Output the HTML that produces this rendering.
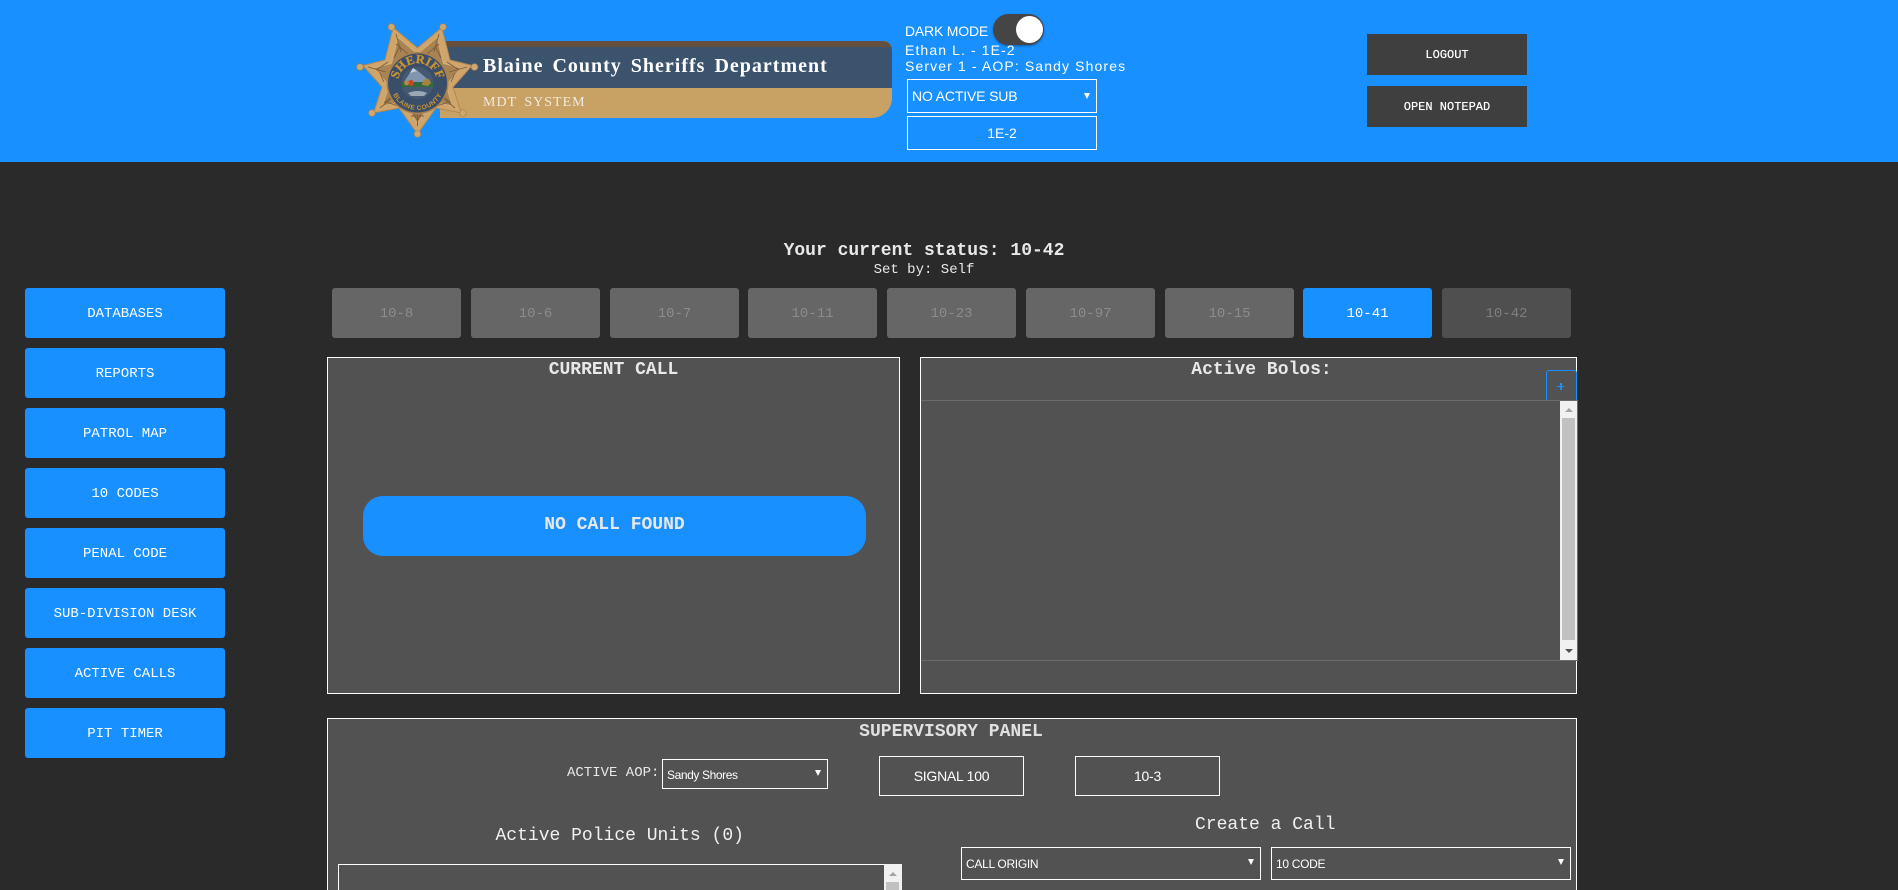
<!DOCTYPE html>
<html><head><meta charset="utf-8"><title>MDT</title>
<style>
html,body{margin:0;padding:0;width:1898px;height:890px;overflow:hidden;background:#2a2a2a}
*{box-sizing:border-box}
#root{position:relative;width:1898px;height:890px;overflow:hidden;background:#2a2a2a}
.a{position:absolute}
.m{font-family:"Liberation Mono",monospace}
.s{font-family:"Liberation Sans",sans-serif}
.c{display:flex;align-items:center;justify-content:center;text-align:center;white-space:nowrap}
.t{white-space:nowrap}
.side{left:25px;width:200px;height:50px;padding-top:1px;background:#1890ff;border-radius:3px;color:#fff;font:14px "Liberation Mono",monospace}
.st{top:288px;width:129px;height:50px;padding-top:1px;background:#666;border-radius:3px;color:#8c8c8c;font:14px "Liberation Mono",monospace}
.panel{background:#525252;border:1px solid #fff}
.box{border:1px solid #fff;color:#fff;font-family:"Liberation Sans",sans-serif}
.arr{position:absolute;width:0;height:0;border-left:3.5px solid transparent;border-right:3.5px solid transparent;border-top:6px solid #fff}
.sb{background:#f1f1f1}
.up{position:absolute;width:0;height:0;border-left:4px solid transparent;border-right:4px solid transparent;border-bottom:4px solid #a3a3a3}
</style></head>
<body>
<div id="root">
<div class="a" style="left:0;top:0;width:1898px;height:162px;background:#1890ff"></div>

<!-- banner -->
<div class="a" style="left:440px;top:41px;width:452px;height:77px;border-radius:0 9px 20px 0;overflow:hidden;background:#c8a164">
  <div class="a" style="left:0;top:0;width:452px;height:6px;background:#654f3d"></div>
  <div class="a" style="left:0;top:6px;width:452px;height:41px;background:#3c536e"></div>
</div>
<div class="a t" style="left:483px;top:54px;font:bold 20px/24px 'Liberation Serif',serif;letter-spacing:1px;word-spacing:3px;color:#fff">Blaine County Sheriffs Department</div>
<div class="a t" style="left:483px;top:94px;font:14px/18px 'Liberation Serif',serif;letter-spacing:1px;word-spacing:3px;color:#f1eadf">MDT SYSTEM</div>

<!-- star -->
<svg class="a" style="left:350px;top:15px" width="135" height="125" viewBox="350 15 135 125">
  <defs>
    <path id="arcTop" d="M399 89 A19.5 19.5 0 1 1 436 89"/>
    <path id="arcBot" d="M390.5 83 A27 27 0 0 0 444.5 83"/>
  </defs>
  <polygon points="417.5,134 399,108 373.7,112.9 382,87 362.9,65.5 385,60 393.2,27.5 417.5,48 441.8,27.5 450,60 472.1,65.5 453,87 461.3,112.9 436,108" fill="#cfa56c" stroke="#b08954" stroke-width="1"/>
  <polygon points="417.5,123 402.7,102 382.5,105.9 389.1,85.2 373.8,68 391.5,63.6 398,37.6 417.5,54 437,37.6 443.5,63.6 461.2,68 445.9,85.2 452.5,105.9 432.3,102" fill="#a98452" stroke="#d6b27f" stroke-width=".8"/>
  <g stroke="#7a5f3a" stroke-width=".9" fill="none">
    <path d="M417.5 126V112M380 108L392 98M368 67L386 72M396 34L401 52M439 34L434 52M467 67L449 72M455 108L443 98"/>
    <path d="M396 44L408 54M439 44L427 54M376 70L388 62M459 70L447 62M386 102L398 106M449 102L437 106M411 116L424 116"/>
    <path d="M400 46L394 58M435 46L441 58M380 73L384 82M455 73L451 82M391 97L384 103M444 97L451 103M412 109L417 120M423 109L418 120"/>
  </g>
  <g fill="#cfa870" stroke="#a98450" stroke-width=".7">
    <circle cx="391.5" cy="27" r="3.3"/><circle cx="443" cy="27" r="3.3"/><circle cx="360" cy="67" r="3.3"/><circle cx="474.5" cy="67" r="3.3"/><circle cx="372" cy="113" r="3.3"/><circle cx="463" cy="113" r="3.3"/><circle cx="417.5" cy="134" r="3.3"/>
  </g>
  <circle cx="417.5" cy="83" r="31" fill="#a98150"/>
  <circle cx="417.5" cy="83" r="29.5" fill="#3a4e69"/>
  <text font-family="'Liberation Serif',serif" font-weight="bold" font-size="12.5" fill="#cb932f" stroke="#cb932f" stroke-width=".3"><textPath href="#arcTop" startOffset="50%" text-anchor="middle">SHERIFF</textPath></text>
  <text font-family="'Liberation Sans',sans-serif" font-weight="bold" font-size="6.6" letter-spacing=".5" fill="#cb932f"><textPath href="#arcBot" startOffset="50%" text-anchor="middle">BLAINE COUNTY</textPath></text>
  <circle cx="417.5" cy="83" r="16" fill="#455a72"/>
  <path d="M404 82 L413 68 L418 71 L431 82 Z" fill="#8196ae"/>
  <path d="M410 73 L413 68 L417 71 Z" fill="#c4d0dc"/>
  <path d="M402 82h31v5h-31z" fill="#2f6b3c"/>
  <circle cx="411" cy="83" r="3" fill="#c7432a"/><circle cx="406.5" cy="83" r="2.4" fill="#b8893b"/>
  <path d="M422 85 q1-7 7-6 l2 4 -3 3z" fill="#a5853c"/>
  <path d="M408 93 q10-4 19 0 l-3 3h-13z" fill="#9aa8b6"/>
</svg>

<!-- dark mode + user -->
<div class="a t s" style="left:905px;top:22px;font-size:14px;line-height:18px;letter-spacing:-.2px;color:#fff">DARK MODE</div>
<div class="a" style="left:993px;top:14px;width:51px;height:31px;border-radius:16px;background:#454545;box-shadow:0 1px 2px rgba(0,0,0,.35)"></div>
<div class="a" style="left:1015.5px;top:16px;width:27px;height:27px;border-radius:50%;background:#fff"></div>
<div class="a t s" style="left:905px;top:41px;font-size:14px;line-height:18px;letter-spacing:1.1px;color:#fff">Ethan L. - 1E-2</div>
<div class="a t s" style="left:905px;top:57px;font-size:14px;line-height:18px;letter-spacing:1.12px;color:#fff">Server 1 - AOP: Sandy Shores</div>
<div class="a box" style="left:907px;top:79px;width:190px;height:34px;font-size:14px;line-height:32px;padding-left:4px;letter-spacing:-.15px">NO ACTIVE SUB<span class="arr" style="right:6px;top:13px"></span></div>
<div class="a box c" style="left:907px;top:116px;width:190px;height:34px;font-size:14px">1E-2</div>

<div class="a c m" style="left:1367px;top:34px;width:160px;height:41px;background:#3f3f3f;color:#fff;font-size:12px;text-shadow:0 0 .5px #fff">LOGOUT</div>
<div class="a c m" style="left:1367px;top:86px;width:160px;height:41px;background:#3f3f3f;color:#fff;font-size:12px;text-shadow:0 0 .5px #fff">OPEN NOTEPAD</div>

<!-- sidebar -->
<div class="a c side" style="top:288px">DATABASES</div>
<div class="a c side" style="top:348px">REPORTS</div>
<div class="a c side" style="top:408px">PATROL MAP</div>
<div class="a c side" style="top:468px">10 CODES</div>
<div class="a c side" style="top:528px">PENAL CODE</div>
<div class="a c side" style="top:588px">SUB-DIVISION DESK</div>
<div class="a c side" style="top:648px">ACTIVE CALLS</div>
<div class="a c side" style="top:708px">PIT TIMER</div>

<!-- status -->
<div class="a c m" style="left:724px;top:240px;width:400px;height:22px;font-weight:bold;font-size:18px;color:#e8e8e8">Your current status: 10-42</div>
<div class="a c m" style="left:724px;top:261px;width:400px;height:18px;font-size:14px;color:#e8e8e8">Set by: Self</div>
<div class="a c st" style="left:332px">10-8</div>
<div class="a c st" style="left:471px">10-6</div>
<div class="a c st" style="left:610px">10-7</div>
<div class="a c st" style="left:748px">10-11</div>
<div class="a c st" style="left:887px">10-23</div>
<div class="a c st" style="left:1026px">10-97</div>
<div class="a c st" style="left:1165px">10-15</div>
<div class="a c st" style="left:1303px;background:#1890ff;color:#fff">10-41</div>
<div class="a c st" style="left:1442px;background:#4f4f4f;color:#7f7f7f">10-42</div>

<!-- current call -->
<div class="a panel" style="left:327px;top:357px;width:573px;height:337px"></div>
<div class="a c m" style="left:327px;top:359px;width:573px;height:22px;font-weight:bold;font-size:18px;color:#e8e8e8">CURRENT CALL</div>
<div class="a c m" style="left:363px;top:496px;width:503px;height:60px;padding-bottom:2px;border-radius:20px;background:#1890ff;color:#e8e8e8;font-weight:bold;font-size:18px">NO CALL FOUND</div>

<!-- bolos -->
<div class="a panel" style="left:920px;top:357px;width:657px;height:337px"></div>
<div class="a c m" style="left:934px;top:359px;width:655px;height:22px;font-weight:bold;font-size:18px;color:#e8e8e8">Active Bolos:</div>
<div class="a" style="left:1546px;top:370px;width:31px;height:31px;border:1.5px solid #1890ff;border-bottom:0;border-radius:3px 3px 0 0"></div>
<div class="a" style="left:1557px;top:385.5px;width:7px;height:1.5px;background:#1890ff"></div>
<div class="a" style="left:1560px;top:383px;width:1.5px;height:7px;background:#1890ff"></div>
<div class="a" style="left:921px;top:400px;width:657px;height:1px;background:#6b6b6b"></div>
<div class="a" style="left:921px;top:660px;width:657px;height:1px;background:#6b6b6b"></div>
<div class="a sb" style="left:1560px;top:401px;width:18px;height:259px;border-right:1px solid #6b6b6b">
  <span class="up" style="left:5px;top:7px"></span>
  <div class="a" style="left:2px;top:17px;width:13px;height:222px;background:#c1c1c1"></div>
  <span class="a" style="left:5px;top:248px;width:0;height:0;border-left:4px solid transparent;border-right:4px solid transparent;border-top:4px solid #505050"></span>
</div>

<!-- supervisory -->
<div class="a panel" style="left:327px;top:718px;width:1250px;height:200px"></div>
<div class="a c m" style="left:326px;top:721px;width:1250px;height:22px;font-weight:bold;font-size:18px;color:#e0e0e0">SUPERVISORY PANEL</div>
<div class="a t m" style="left:567px;top:765px;font-size:14px;line-height:16px;color:#e8e8e8">ACTIVE AOP:</div>
<div class="a box" style="left:662px;top:759px;width:166px;height:30px;font-size:12px;line-height:30px;padding-left:4px;letter-spacing:-.4px">Sandy Shores<span class="arr" style="right:6px;top:10px"></span></div>
<div class="a box c" style="left:879px;top:756px;width:145px;height:40px;font-size:14px;letter-spacing:-.25px">SIGNAL 100</div>
<div class="a box c" style="left:1075px;top:756px;width:145px;height:40px;font-size:14px;letter-spacing:-.25px">10-3</div>
<div class="a t m" style="left:1195px;top:814px;font-size:18px;line-height:22px;color:#f0f0f0">Create a Call</div>
<div class="a t m" style="left:495.5px;top:825px;font-size:18px;line-height:22px;color:#f0f0f0">Active Police Units (0)</div>
<div class="a box" style="left:961px;top:847px;width:300px;height:33px;font-size:12px;line-height:32px;padding-left:4px;letter-spacing:-.3px">CALL ORIGIN<span class="arr" style="right:6px;top:11px"></span></div>
<div class="a box" style="left:1271px;top:847px;width:300px;height:33px;font-size:12px;line-height:32px;padding-left:4px;letter-spacing:-.3px">10 CODE<span class="arr" style="right:6px;top:11px"></span></div>
<div class="a" style="left:338px;top:864px;width:548px;height:60px;border:1px solid #fff;border-right:0"></div>
<div class="a sb" style="left:884px;top:864px;width:18px;height:26px">
  <span class="up" style="left:5px;top:8px"></span>
  <div class="a" style="left:2px;top:18px;width:13px;height:10px;background:#c1c1c1"></div>
</div>
</div>
</body></html>
